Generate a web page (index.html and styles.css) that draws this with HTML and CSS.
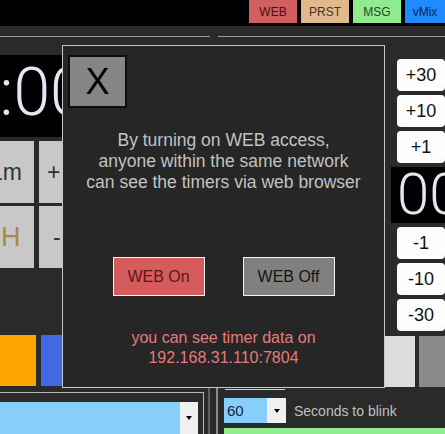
FILE: index.html
```html
<!DOCTYPE html>
<html lang="en">
<head>
  <meta charset="UTF-8">
  <meta name="viewport" content="width=device-width, initial-scale=1.0">
  <title>Timer - WEB access</title>
  <link rel="stylesheet" href="styles.css">
</head>
<body>
  <div class="app">
    <header class="topbar">
      <span class="tab tab-web">WEB</span>
      <span class="tab tab-prst">PRST</span>
      <span class="tab tab-msg">MSG</span>
      <span class="tab tab-vmix">vMix</span>
    </header>

    <main class="workspace">
      <section class="group group-left">
        <div class="clock clock-main">0:00</div>
        <div class="quick-grid">
          <button class="quick quick-min"><span class="quick-num">1</span>m</button>
          <button class="quick quick-plus">+1</button>
          <button class="quick quick-hour">H</button>
          <button class="quick quick-minus">-1</button>
        </div>
        <div class="swatches">
          <span class="swatch swatch-orange"></span>
          <span class="swatch swatch-blue"></span>
        </div>
      </section>

      <section class="group group-right">
        <div class="right-top">
          <div class="adjust">
            <button class="step">+30</button>
            <button class="step">+10</button>
            <button class="step">+1</button>
            <div class="clock clock-small">00</div>
            <button class="step">-1</button>
            <button class="step">-10</button>
            <button class="step">-30</button>
          </div>
        </div>
        <div class="right-swatches">
          <span class="swatch swatch-light"></span>
          <span class="swatch swatch-gray"></span>
        </div>
      </section>
    </main>

    <footer class="settings">
      <div class="settings-box">
        <div class="picker picker-wide">
          <span class="picker-value"></span>
          <span class="picker-arrow"></span>
        </div>
      </div>
      <div class="rails"></div>
      <div class="blink-settings">
        <div class="blink-mark"></div>
        <div class="blink-row">
          <div class="picker picker-small">
            <span class="picker-value">60</span>
            <span class="picker-arrow"></span>
          </div>
          <span class="blink-label">Seconds to blink</span>
        </div>
        <div class="green-bar"></div>
      </div>
    </footer>

    <!-- WEB access dialog -->
    <div class="modal">
      <button class="close">X</button>
      <p class="modal-text">By turning on WEB access,<br>anyone within the same network<br>can see the timers via web browser</p>
      <div class="modal-actions">
        <button class="web-btn web-on">WEB On</button>
        <button class="web-btn web-off">WEB Off</button>
      </div>
      <p class="modal-note">you can see timer data on<br>192.168.31.110:7804</p>
    </div>
  </div>
</body>
</html>
```

FILE: styles.css
```css
body {
  margin: 0;
  background-color: #2a2a2a;
  font-family: "Liberation Sans", Arial, sans-serif;
}
button {
  font-family: inherit;
  padding: 0;
  cursor: pointer;
}
.app {
  position: relative;
  width: 445px;
  height: 434px;
  overflow: hidden;
  background-color: #2a2a2a;
}

/* top tabs */
.topbar {
  height: 26px;
  background-color: #000;
  display: flex;
  justify-content: flex-end;
  align-items: flex-start;
  gap: 4px;
}
.tab {
  width: 48px;
  height: 23px;
  display: flex;
  align-items: center;
  justify-content: center;
  font-size: 12px;
}
.tab-web { background-color: #d05f5f; color: #4a1010; }
.tab-prst { background-color: #e2b98c; color: #4a3420; }
.tab-msg { background-color: #90ea8e; color: #1f4a1f; }
.tab-vmix { width: 40px; background-color: #1e8cff; color: #0b2350; }

/* main area */
.workspace {
  display: flex;
  height: 362px;
  padding-top: 10px;
  box-sizing: border-box;
}
.group {
  border-top: 1px solid #9c9c9c;
}
.group-left {
  width: 210px;
  flex: none;
  display: flex;
  flex-direction: column;
}
.group-right {
  margin-left: 8px;
  flex: 1;
  min-width: 0;
  display: flex;
  flex-direction: column;
}
.clock {
  background-color: #000;
  color: #e2e8f1;
  font-family: Roboto, "Liberation Sans", sans-serif;
  font-weight: 300;
  white-space: nowrap;
  overflow: hidden;
}
.clock-main {
  margin-top: 18px;
  height: 82px;
  font-size: 66px;
  line-height: 76px;
  text-indent: -37px;
}
.quick-grid {
  margin-top: 4px;
  display: grid;
  grid-template-columns: 34px 34px;
  grid-template-rows: 62px 62px;
  column-gap: 5px;
  row-gap: 3px;
}
.quick {
  background-color: #c8c8c8;
  border: none;
  color: #333;
  font-size: 23px;
  text-align: left;
  overflow: hidden;
  white-space: nowrap;
}
.quick-min { text-indent: -10px; }
.quick-num { color: #1c2c6c; }
.quick-plus { padding-left: 8px; }
.quick-hour { font-size: 27px; color: #a8874a; padding-left: 1px; }
.quick-minus { padding-left: 14px; }
.swatches {
  margin-top: 67px;
  height: 51px;
  display: flex;
  gap: 5px;
}
.swatch {
  display: block;
  flex: none;
  height: 100%;
}
.swatch-orange { width: 36px; background-color: #ffa500; }
.swatch-blue { width: 40px; background-color: #4169e1; }

.right-top {
  display: flex;
  padding-top: 22px;
  padding-left: 173px;
}
.adjust {
  width: 54px;
  flex: none;
  display: flex;
  flex-direction: column;
  gap: 4px;
}
.step {
  margin-left: 6px;
  width: 48px;
  height: 32px;
  border: none;
  border-radius: 4px;
  background-color: #fdfdfd;
  color: #111;
  font-size: 18px;
}
.clock-small {
  height: 56px;
  font-size: 58px;
  line-height: 54px;
  padding-left: 6px;
}
.right-swatches {
  margin-top: 5px;
  padding-left: 166px;
  height: 51px;
  display: flex;
  gap: 4px;
}
.swatch-light { width: 31px; background-color: #dcdcdc; }
.swatch-gray { width: 40px; background-color: #8a8a8a; }

/* bottom settings strip */
.settings {
  display: flex;
  height: 46px;
}
.settings-box {
  width: 204px;
  flex: none;
  box-sizing: border-box;
  margin-top: 4px;
  padding-top: 9px;
  border-top: 1px solid #b8b8b8;
  border-right: 1px solid #b8b8b8;
}
.picker {
  display: flex;
}
.picker-wide {
  width: 198px;
  height: 32px;
}
.picker-value {
  flex: 1;
  background-color: #87cefa;
  color: #14244a;
}
.picker-arrow {
  width: 18px;
  background-color: #f0f0f0;
  display: flex;
  align-items: center;
  justify-content: center;
}
.picker-arrow::after {
  content: "";
  border-left: 3.5px solid transparent;
  border-right: 3.5px solid transparent;
  border-top: 4px solid #000;
}
.rails {
  width: 10px;
  flex: none;
  margin-left: 4px;
  box-sizing: border-box;
  border-left: 2px solid #5e5e5e;
  border-right: 2px solid #8c8c8c;
}
.blink-settings {
  margin-left: 6px;
  flex: 1;
  min-width: 0;
  display: flex;
  flex-direction: column;
}
.blink-mark {
  margin: 1px 0 0 1px;
  width: 60px;
  height: 2px;
  background-color: #d0d0d0;
}
.blink-row {
  margin-top: 8px;
  height: 25px;
  display: flex;
  align-items: center;
  gap: 8px;
}
.picker-small {
  width: 62px;
  height: 25px;
}
.picker-small .picker-value {
  font-size: 15px;
  line-height: 25px;
  padding-left: 3px;
}
.picker-small .picker-arrow {
  width: 19px;
  flex: none;
}
.blink-label {
  font-size: 14px;
  color: #c0c0c0;
}
.green-bar {
  margin-top: 5px;
  height: 8px;
  background-color: #90ee90;
}

/* dialog */
.modal {
  position: absolute;
  left: 62px;
  top: 45px;
  width: 323px;
  height: 343px;
  box-sizing: border-box;
  border: 1px solid #c6c6c6;
  background-color: #262626;
  padding: 9px 5px;
  display: flex;
  flex-direction: column;
  align-items: center;
}
.close {
  align-self: flex-start;
  width: 59px;
  height: 53px;
  border: 2px solid #0d0d0d;
  background-color: #858585;
  color: #000;
  font-size: 36px;
  line-height: 1;
}
.modal-text {
  margin: 22px 0 0;
  text-align: center;
  color: #c2c2c2;
  font-size: 17.5px;
  line-height: 21px;
}
.modal-actions {
  margin-top: 64px;
  display: flex;
  gap: 38px;
}
.web-btn {
  width: 92px;
  height: 39px;
  border: 1px solid #f2f2f2;
  font-size: 16px;
}
.web-on {
  background-color: #d45c5c;
  color: #5e1616;
}
.web-off {
  background-color: #808080;
  color: #141414;
}
.modal-note {
  margin: 32px 0 0;
  text-align: center;
  color: #e57b7b;
  font-size: 16px;
  line-height: 20px;
}
```
